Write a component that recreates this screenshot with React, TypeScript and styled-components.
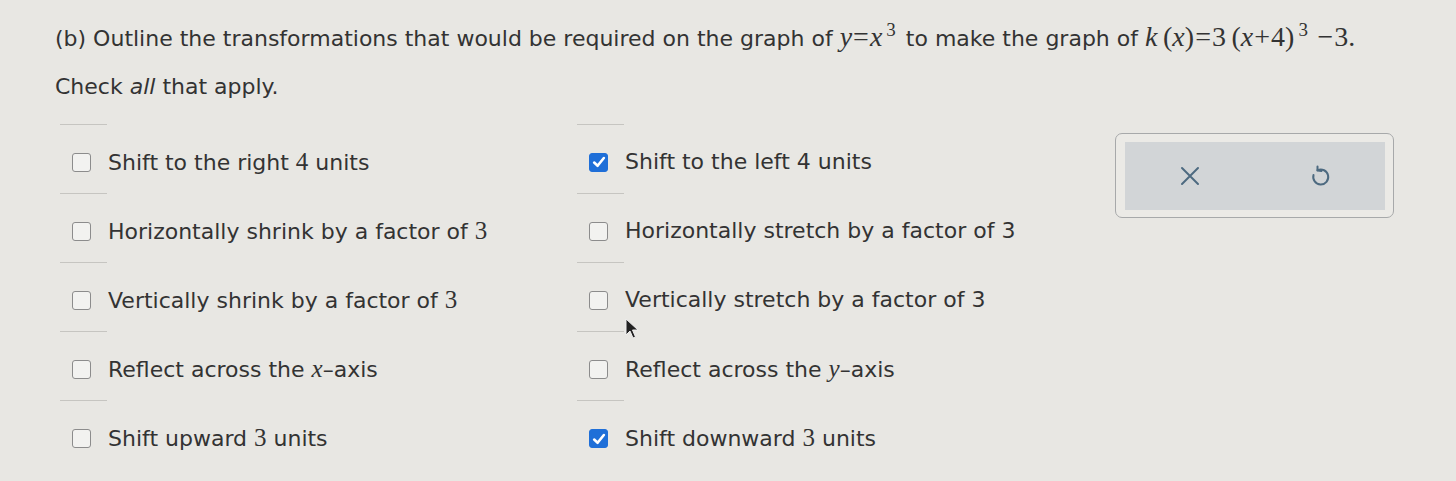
import * as React from 'react';
import styled, { createGlobalStyle } from 'styled-components';

interface Option {
    label: React.ReactNode;
    checked?: boolean;
}

const GlobalStyle = createGlobalStyle`
  html, body {
    margin: 0;
    padding: 0;
    background: #e8e7e3;
  }
  body {
    font-family: "DejaVu Sans", Verdana, sans-serif;
    color: #333;
  }
`;

const Page = styled.div`
  width: 1456px;
  height: 481px;
  padding: 22px 0 0 55px;
  box-sizing: border-box;
  overflow: hidden;
  position: relative;
`;

const Question = styled.p`
  margin: 0;
  font-size: 22px;
  line-height: 34px;
  white-space: nowrap;
`;

const Hint = styled.p`
  margin: 17px 0 0;
  font-size: 22px;
  line-height: 28px;
`;

const Math = styled.span`
  font-family: "Liberation Serif", "Times New Roman", serif;
  font-size: 28px;
  line-height: 1;
`;

const Var = styled.i<{ $size?: number }>`
  font-family: "Liberation Serif", "Times New Roman", serif;
  font-size: ${({ $size }) => $size || 28}px;
  line-height: 1;
`;

const Op = styled.span`
  margin: 0 1px;
`;

const Sup = styled.sup`
  font-size: 19px;
  position: relative;
  top: -10px;
  vertical-align: baseline;
  margin-left: 4px;
  margin-right: 3px;
  line-height: 1;
`;

const Num = styled.span`
  font-family: "Liberation Serif", "Times New Roman", serif;
  font-size: 25px;
  line-height: 1;
`;

const Body = styled.div`
  display: flex;
  align-items: flex-start;
  margin-top: 23px;
`;

const Options = styled.div`
  display: grid;
  grid-template-columns: 517px 517px;
  margin-left: 5px;
`;

const Cell = styled.div`
  height: 69px;
  display: flex;
  flex-direction: column;
`;

const Rule = styled.div`
  width: 47px;
  height: 1px;
  background: #c6c5c1;
`;

const Choice = styled.label`
  display: flex;
  align-items: center;
  gap: 17px;
  margin: 24px 0 0 12px;
  font-size: 22px;
  line-height: 26px;
  white-space: nowrap;
`;

const Box = styled.span<{ $checked?: boolean }>`
  width: 19px;
  height: 19px;
  box-sizing: border-box;
  border-radius: 3px;
  border: 1.5px solid ${({ $checked }) => ($checked ? '#1f6fd8' : '#8c8c8c')};
  background: ${({ $checked }) => ($checked ? '#1f6fd8' : '#f2f2f0')};
  display: flex;
  align-items: center;
  justify-content: center;
  flex: none;
`;

const Tools = styled.div`
  margin: 9px 0 0 21px;
  width: 279px;
  height: 85px;
  box-sizing: border-box;
  border: 1.5px solid #a7a9aa;
  border-radius: 7px;
  padding: 8px 8px 7px 9px;
  background: #ebeae6;
`;

const ToolPanel = styled.div`
  height: 100%;
  background: #d2d5d7;
  display: flex;
  align-items: center;
  justify-content: space-around;
`;

const ToolButton = styled.button`
  border: none;
  background: transparent;
  padding: 0;
  display: flex;
  color: #4d6a80;
`;

const Cursor = styled.svg`
  position: absolute;
  left: 625px;
  top: 318px;
`;

const Check = () => (
    <svg width="14" height="14" viewBox="0 0 13 13">
        <path d="M2 7 L5.2 10 L11 2.8" fill="none" stroke="#fff" strokeWidth="2.4" strokeLinecap="round" strokeLinejoin="round" />
    </svg>
);

const options: Option[] = [
    { label: <>Shift to the right <Num>4</Num> units</> },
    { label: <>Shift to the left 4 units</>, checked: true },
    { label: <>Horizontally shrink by a factor of <Num>3</Num></> },
    { label: <>Horizontally stretch by a factor of 3</> },
    { label: <>Vertically shrink by a factor of <Num>3</Num></> },
    { label: <>Vertically stretch by a factor of 3</> },
    { label: <>Reflect across the <Var $size={25}>x</Var>–axis</> },
    { label: <>Reflect across the <Var $size={25}>y</Var>–axis</> },
    { label: <>Shift upward <Num>3</Num> units</> },
    { label: <>Shift downward <Num>3</Num> units</>, checked: true },
];

const App: React.FC = () => (
    <>
        <GlobalStyle />
        <Page>
            <Question>
                (b) Outline the transformations that would be required on the graph of{' '}
                <Math><Var>y</Var><Op>=</Op><Var>x</Var><Sup>3</Sup></Math>{' '}
                to make the graph of{' '}
                <Math>
                    <Var>k</Var>&thinsp;(<Var>x</Var>)<Op>=</Op>3&thinsp;(<Var>x</Var><Op>+</Op>4)<Sup>3</Sup>&thinsp;<Op>−</Op>3.
                </Math>
            </Question>
            <Hint>Check <i>all</i> that apply.</Hint>
            <Body>
                <Options>
                    {options.map((o, i) => (
                        <Cell key={i}>
                            <Rule />
                            <Choice>
                                <Box $checked={o.checked}>{o.checked && <Check />}</Box>
                                <span>{o.label}</span>
                            </Choice>
                        </Cell>
                    ))}
                </Options>
                <Tools>
                    <ToolPanel>
                        <ToolButton aria-label="Clear">
                            <svg width="22" height="22" viewBox="0 0 22 22">
                                <path d="M3 3 L19 19 M19 3 L3 19" stroke="currentColor" strokeWidth="2" strokeLinecap="round" />
                            </svg>
                        </ToolButton>
                        <ToolButton aria-label="Undo">
                            <svg width="22" height="22" viewBox="0 0 22 22">
                                <path d="M8.5 5.2 A7.5 7.5 0 1 1 4.5 10" fill="none" stroke="currentColor" strokeWidth="2" strokeLinecap="round" />
                                <path d="M8.5 1.5 L8.5 5.5 L12.5 6" fill="none" stroke="currentColor" strokeWidth="2" strokeLinecap="round" strokeLinejoin="round" />
                            </svg>
                        </ToolButton>
                    </ToolPanel>
                </Tools>
            </Body>
            <Cursor width="14" height="22" viewBox="0 0 14 22">
                <path d="M1 1 L1 17 L5 13 L8 20 L10.5 19 L7.5 12 L13 12 Z" fill="#222" stroke="#eee" strokeWidth="1" />
            </Cursor>
        </Page>
    </>
);

export default App;
